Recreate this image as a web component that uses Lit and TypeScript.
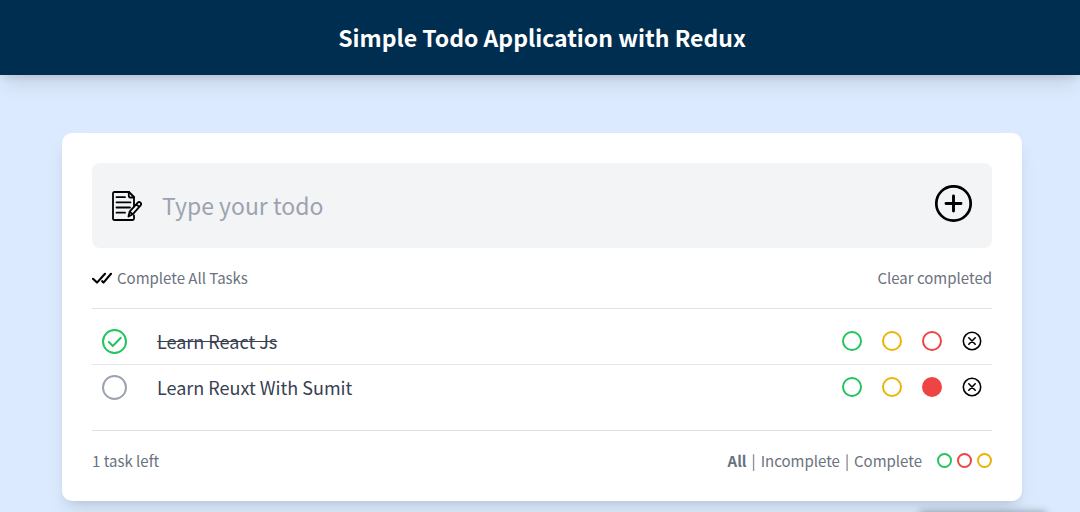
import { LitElement, html, css, svg } from "lit";
import { customElement, state } from "lit/decorators.js";
import { classMap } from "lit/directives/class-map.js";

type Priority = "green" | "yellow" | "red";
type Status = "All" | "Incomplete" | "Complete";

interface Todo {
  id: number;
  text: string;
  done: boolean;
  priority: Priority | "";
}

const PRIORITIES: Priority[] = ["green", "yellow", "red"];
const FILTER_COLORS: Priority[] = ["green", "red", "yellow"];
const STATUSES: Status[] = ["All", "Incomplete", "Complete"];

const noteIcon = svg`<svg class="note" viewBox="0 0 30 30" fill="none" stroke="#000" stroke-width="1.8" stroke-linejoin="round" stroke-linecap="round" aria-hidden="true">
  <path d="M22 24.5V27.5Q22 29 20.500 29H2.500Q1 29 1 27.500V2.500Q1 1 2.500 1H17L22 6V15.500"/>
  <path d="M16.800 1V5Q16.800 6.500 18.300 6.500H22"/>
  <path d="M4.500 6.200H13M4.500 11.300H18.500M4.500 16.500H18M4.500 21.700H13"/>
  <path d="M17.600 20.700L25.500 11.800Q27 10.300 28.500 11.600Q29.800 12.900 28.600 14.400L20.700 23.300L16.500 25.500ZM24.300 13.300L27.200 15.900M17.600 20.700L20.700 23.300"/>
</svg>`;

const plusIcon = svg`<svg class="plus" viewBox="0 0 38 38" fill="none" stroke="#000" stroke-linecap="round" aria-hidden="true">
  <circle cx="18.500" cy="18.500" r="17.200" stroke-width="2.700"/>
  <path d="M18.500 11V26M11 18.500H26" stroke-width="2.900"/>
</svg>`;

const doubleTick = svg`<svg class="ticks" viewBox="0 0 20 20" fill="none" stroke="#000" stroke-width="2.100" stroke-linecap="round" stroke-linejoin="round" aria-hidden="true">
  <path d="M1 10.800L5 14.600L13 5.800M10.200 13.200L11.500 14.600L19 5.800"/>
</svg>`;

const removeIcon = svg`<svg class="cross" viewBox="0 0 20 20" fill="none" stroke="#000" stroke-width="1.600" stroke-linecap="round" aria-hidden="true">
  <circle cx="10" cy="10" r="8.700"/>
  <path d="M6.800 6.800L13.200 13.200M13.200 6.800L6.800 13.200"/>
</svg>`;

const tickIcon = svg`<svg class="tick" viewBox="0 0 25 25" fill="none" stroke="currentColor" stroke-width="2" stroke-linecap="round" stroke-linejoin="round" aria-hidden="true">
  <path d="M6.800 13L10.800 17L18.800 8.800"/>
</svg>`;

@customElement("app-root")
export class AppRoot extends LitElement {
  static styles = css`
    :host {
      display: block;
      min-height: 100vh;
      box-sizing: border-box;
      position: relative;
      overflow: hidden;
      background: #dbeafe;
      color: #6b7280;
      font: 15px/20px "Source Sans Pro", "Noto Sans CJK SC", sans-serif;
    }
    * { box-sizing: border-box; }
    button, input {
      font: inherit;
      color: inherit;
      margin: 0;
      padding: 0;
      border: 0;
      background: none;
    }
    button, .check, .dot { cursor: pointer; }
    svg { display: block; }
    .bar {
      padding: 20px 20px 20px 24px;
      background: #002e50;
      box-shadow: 0 12px 19px -4px rgba(0, 0, 0, 0.1), 0 5px 8px -3px rgba(0, 0, 0, 0.1);
      text-align: center;
    }
    .title {
      margin: 0;
      color: #fff;
      font-size: 23px;
      line-height: 35px;
      font-weight: 700;
    }
    .page { padding: 58px 20px 11px 24px; }
    .card {
      max-width: 960px;
      margin: 0 auto;
      padding: 30px;
      background: #fff;
      border-radius: 10px;
      box-shadow: 0 12px 19px -4px rgba(0, 0, 0, 0.1), 0 5px 8px -5px rgba(0, 0, 0, 0.1);
    }
    .entry {
      display: flex;
      align-items: center;
      height: 85px;
      padding: 0 19px 0 20px;
      background: #f3f4f6;
      border-radius: 8px;
    }
    .note { width: 30px; height: 30px; }
    .field {
      flex: 1;
      min-width: 0;
      height: 50px;
      padding: 0 20px 2px;
      outline: none;
      font-size: 23px;
    }
    .field::placeholder { color: #9ca3af; opacity: 1; }
    .add { padding-bottom: 4px; }
    .plus { width: 38px; height: 38px; }
    .tools, .summary {
      display: flex;
      justify-content: space-between;
      align-items: center;
      padding: 20px 0;
    }
    .summary { padding-bottom: 0; }
    .all { display: flex; align-items: center; gap: 5px; }
    .ticks { width: 20px; height: 20px; }
    .list {
      list-style: none;
      margin: 0;
      padding: 10px 0 20px;
      border: solid #e0e2e6;
      border-width: 1px 0;
    }
    .row {
      display: flex;
      align-items: flex-start;
      gap: 20px;
      padding: 10px;
    }
    .row + .row { border-top: 1px solid #e5e7eb; }
    .check { display: grid; }
    .box, .tick { grid-area: 1 / 1; width: 25px; height: 25px; }
    .box {
      appearance: none;
      border: 2px solid #9ca3af;
      border-radius: 50%;
    }
    .box:checked { border-color: #22c55e; }
    .tick { color: #22c55e; pointer-events: none; }
    .text {
      flex: 1;
      padding-left: 10px;
      color: #374151;
      font-size: 18px;
      line-height: 25px;
    }
    .text.done { text-decoration: line-through; }
    .dots { display: flex; gap: 20px; margin: 0; padding: 2px 0 0; border: 0; }
    .remove { padding-top: 2px; }
    .dot {
      appearance: none;
      width: 20px;
      height: 20px;
      border: 2px solid currentColor;
      border-radius: 50%;
    }
    .dot.small { width: 15px; height: 15px; }
    .dot.green { color: #22c55e; }
    .dot.yellow { color: #eab308; }
    .dot.red { color: #ef4444; }
    .dot:checked { background: currentColor; }
    .cross { width: 20px; height: 20px; }
    .filters { display: flex; align-items: center; }
    .status + .status::before { content: "|"; padding: 0 5px; font-weight: 400; }
    .status.on { font-weight: 700; }
    .colors { display: flex; gap: 5px; padding: 0 0 1px 15px; }
    .drawer {
      position: absolute;
      top: 100%;
      right: 34px;
      width: 126px;
      height: 40px;
      background: #fff;
      box-shadow: 0 0 8px rgba(0, 0, 0, 0.35);
    }
  `;

  @state() private todos: Todo[] = [
    { id: 1, text: "Learn React Js", done: true, priority: "" },
    { id: 2, text: "Learn Reuxt With Sumit", done: false, priority: "red" },
  ];
  @state() private status: Status = "All";
  @state() private colors: Priority[] = [];

  private patch(id: number, change: Partial<Todo>) {
    this.todos = this.todos.map((t) => (t.id === id ? { ...t, ...change } : t));
  }

  private add(e: Event) {
    e.preventDefault();
    const field = this.renderRoot.querySelector<HTMLInputElement>(".field")!;
    const text = field.value.trim();
    if (!text) return;
    this.todos = [...this.todos, { id: Date.now(), text, done: false, priority: "" }];
    field.value = "";
  }

  private toggleColor(c: Priority) {
    this.colors = this.colors.includes(c) ? this.colors.filter((x) => x !== c) : [...this.colors, c];
  }

  private get visible() {
    return this.todos.filter(
      (t) =>
        (this.status === "All" || t.done === (this.status === "Complete")) &&
        (!this.colors.length || this.colors.includes(t.priority as Priority))
    );
  }

  private row(t: Todo) {
    return html`<li class="row">
      <label class="check" for="t${t.id}">
        <input class="box" type="checkbox" id="t${t.id}" aria-label=${t.text} .checked=${t.done}
          @change=${() => this.patch(t.id, { done: !t.done })} />
        ${t.done ? tickIcon : ""}
      </label>
      <label for="t${t.id}" class=${classMap({ text: true, done: t.done })}>${t.text}</label>
      <fieldset class="dots" aria-label="Priority">
        ${PRIORITIES.map(
          (p) => html`<input class="dot ${p}" type="radio" name="p${t.id}" aria-label=${p}
            .checked=${t.priority === p} @change=${() => this.patch(t.id, { priority: p })} />`
        )}
      </fieldset>
      <button class="remove" type="button" aria-label="Delete"
        @click=${() => (this.todos = this.todos.filter((x) => x.id !== t.id))}>${removeIcon}</button>
    </li>`;
  }

  render() {
    const left = this.todos.filter((t) => !t.done).length;
    return html`
      <header class="bar"><h1 class="title">Simple Todo Application with Redux</h1></header>
      <main class="page">
        <section class="card">
          <form class="entry" @submit=${this.add}>
            ${noteIcon}
            <input class="field" type="text" placeholder="Type your todo" aria-label="Type your todo" />
            <button class="add" type="submit" aria-label="Add">${plusIcon}</button>
          </form>
          <div class="tools">
            <button class="all" type="button"
              @click=${() => (this.todos = this.todos.map((t) => ({ ...t, done: true })))}>
              ${doubleTick}<span>Complete All Tasks</span>
            </button>
            <button type="button"
              @click=${() => (this.todos = this.todos.filter((t) => !t.done))}>Clear completed</button>
          </div>
          <ul class="list">${this.visible.map((t) => this.row(t))}</ul>
          <div class="summary">
            <span>${left} ${left === 1 ? "task" : "tasks"} left</span>
            <div class="filters">
              ${STATUSES.map(
                (s) => html`<button type="button" class=${classMap({ status: true, on: this.status === s })}
                  @click=${() => (this.status = s)}>${s}</button>`
              )}
              <div class="colors">
                ${FILTER_COLORS.map(
                  (c) => html`<input class="dot small ${c}" type="checkbox" aria-label=${c}
                    .checked=${this.colors.includes(c)} @change=${() => this.toggleColor(c)} />`
                )}
              </div>
            </div>
          </div>
        </section>
      </main>
      <div class="drawer"></div>
    `;
  }
}
